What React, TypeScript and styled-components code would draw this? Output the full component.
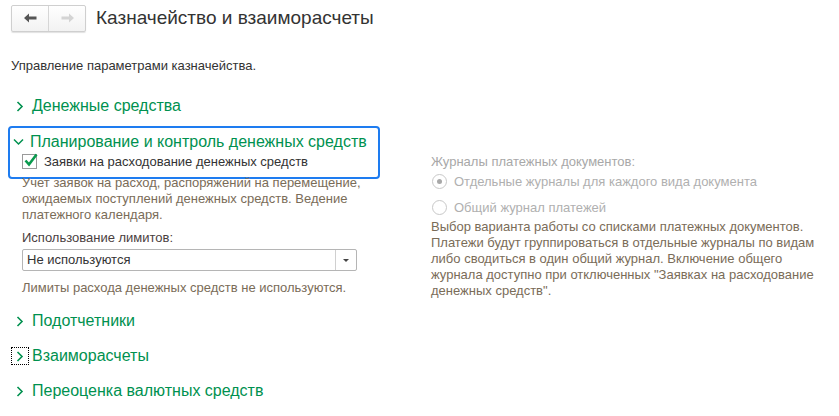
import styled, { createGlobalStyle } from 'styled-components';

const GlobalStyle = createGlobalStyle`
  html, body {
    margin: 0;
    padding: 0;
    background: #fff;
  }
  body {
    font-family: Arial, "Liberation Sans", sans-serif;
    color: #333;
  }
`;

const Page = styled.div`
  width: 839px;
  height: 416px;
  overflow: hidden;
  padding: 5px 0 0 11px;
  box-sizing: border-box;
`;

const Header = styled.div`
  display: flex;
  align-items: center;
  gap: 10px;
  height: 26px;
`;

const NavGroup = styled.div`
  display: flex;
  height: 25px;
  border: 1px solid #cfcfcf;
  border-radius: 2px;
  box-shadow: 0 1px 1px rgba(0, 0, 0, 0.12);
  background: linear-gradient(#fff, #f2f2f2);
`;

const NavButton = styled.div<{ $first?: boolean }>`
  width: 36px;
  display: flex;
  align-items: center;
  justify-content: center;
  border-right: ${(p) => (p.$first ? '1px solid #d6d6d6' : 'none')};
`;

const Title = styled.h1`
  margin: 0;
  font-size: 19px;
  font-weight: normal;
  color: #333;
`;

const Intro = styled.p`
  margin: 27px 0 0;
  font-size: 13px;
  color: #333;
  line-height: 16px;
`;

const Group = styled.div<{ $mt: number }>`
  display: flex;
  align-items: center;
  gap: 5px;
  height: 20px;
  margin-top: ${(p) => p.$mt}px;
  padding-left: 2px;
`;

const GroupTitle = styled.span`
  font-size: 16px;
  color: #00914f;
`;

const Chevron = styled.span<{ $focused?: boolean }>`
  display: flex;
  align-items: center;
  justify-content: center;
  width: 14px;
  height: 14px;
  outline: ${(p) => (p.$focused ? '1px dotted #000' : 'none')};
  outline-offset: 1px;
`;

const Expanded = styled.div`
  display: flex;
  align-items: flex-start;
  margin-top: 10px;
`;

const LeftCol = styled.div`
  width: 410px;
  flex-shrink: 0;
  margin-left: -3px;
`;

const Highlight = styled.div`
  width: 368px;
  border: 2px solid #1e7cf0;
  border-radius: 4px;
  padding: 5px 0 6px 0;
`;

const OpenTitle = styled.div`
  display: flex;
  align-items: center;
  gap: 5px;
  height: 18px;
  padding-left: 1px;
`;

const CheckRow = styled.label`
  display: flex;
  align-items: center;
  gap: 7px;
  height: 20px;
  padding-left: 12px;
  font-size: 13px;
  color: #333;
`;

const Box = styled.span`
  width: 13px;
  height: 13px;
  border: 1px solid #9a9a9a;
  background: #fff;
  position: relative;
  display: inline-block;
`;

const CheckMark = styled.svg`
  position: absolute;
  left: 0;
  top: -3px;
`;

const Inner = styled.div`
  padding-left: 14px;
`;

const Note = styled.p<{ $mt?: number }>`
  margin: ${(p) => p.$mt ?? 0}px 0 0;
  font-size: 13px;
  line-height: 16px;
  color: #7a6c58;
`;

const Label = styled.div`
  margin-top: 7px;
  font-size: 13px;
  line-height: 16px;
  color: #4a3e3e;
`;

const Select = styled.div`
  display: flex;
  width: 335px;
  height: 22px;
  margin-top: 3px;
  border: 1px solid #b5b5b5;
  border-radius: 2px;
  box-sizing: border-box;
  background: #fff;
`;

const SelectValue = styled.div`
  flex: 1;
  padding-left: 4px;
  font-size: 13px;
  line-height: 20px;
  color: #333;
`;

const SelectButton = styled.div`
  width: 20px;
  border-left: 1px solid #d0d0d0;
  display: flex;
  align-items: center;
  justify-content: center;
`;

const Arrow = styled.span`
  width: 0;
  height: 0;
  border-left: 3px solid transparent;
  border-right: 3px solid transparent;
  border-top: 3px solid #444;
`;

const RightCol = styled.div`
  padding-top: 28px;
  margin-left: 13px;
`;

const DisabledLabel = styled.div`
  font-size: 13px;
  line-height: 16px;
  color: #a8a8a8;
`;

const Radio = styled.div<{ $mt: number }>`
  display: flex;
  align-items: center;
  gap: 7px;
  height: 20px;
  margin-top: ${(p) => p.$mt}px;
  font-size: 13px;
  color: #b0b0b0;
`;

const RadioCircle = styled.span<{ $checked?: boolean }>`
  width: 15px;
  height: 15px;
  margin-left: 1px;
  border: 1px solid #c8c8c8;
  border-radius: 50%;
  box-sizing: border-box;
  display: flex;
  align-items: center;
  justify-content: center;
  &::after {
    content: '';
    width: 5px;
    height: 5px;
    border-radius: 50%;
    background: ${(p) => (p.$checked ? '#a8a8a8' : 'transparent')};
  }
`;

const RightNote = styled(Note)`
  width: 400px;
`;

const ChevronRight = () => (
  <svg width="8" height="11" viewBox="0 0 8 11">
    <path d="M1.5 1 L6 5.5 L1.5 10" fill="none" stroke="#00914f" strokeWidth="1.6" />
  </svg>
);

const ChevronDown = () => (
  <svg width="11" height="8" viewBox="0 0 11 8">
    <path d="M1 1.5 L5.5 6 L10 1.5" fill="none" stroke="#00914f" strokeWidth="1.5" />
  </svg>
);

const sections = ['Подотчетники', 'Взаиморасчеты', 'Переоценка валютных средств'];

export default function App() {
  return (
    <Page>
      <GlobalStyle />
      <Header>
        <NavGroup>
          <NavButton $first>
            <svg width="13" height="10" viewBox="0 0 13 10">
              <path d="M0 5 L5 0.5 V3.5 H12.5 V6.5 H5 V9.5 Z" fill="#555" />
            </svg>
          </NavButton>
          <NavButton>
            <svg width="13" height="10" viewBox="0 0 13 10">
              <path d="M13 5 L8 0.5 V3.5 H0.5 V6.5 H8 V9.5 Z" fill="#d4d4d4" />
            </svg>
          </NavButton>
        </NavGroup>
        <Title>Казначейство и взаиморасчеты</Title>
      </Header>

      <Intro>Управление параметрами казначейства.</Intro>

      <Group $mt={22}>
        <Chevron>
          <ChevronRight />
        </Chevron>
        <GroupTitle>Денежные средства</GroupTitle>
      </Group>

      <Expanded>
        <LeftCol>
          <Highlight>
            <OpenTitle>
              <Chevron>
                <ChevronDown />
              </Chevron>
              <GroupTitle>Планирование и контроль денежных средств</GroupTitle>
            </OpenTitle>
            <CheckRow>
              <Box>
                <CheckMark width="16" height="16" viewBox="0 0 16 16">
                  <path d="M2.5 8.5 L6 12.5 L13.5 2.5" fill="none" stroke="#0a9a4e" strokeWidth="2.6" />
                </CheckMark>
              </Box>
              Заявки на расходование денежных средств
            </CheckRow>
          </Highlight>
          <Inner>
            <Note $mt={-4}>
              Учет заявок на расход, распоряжений на перемещение,
              <br />
              ожидаемых поступлений денежных средств. Ведение
              <br />
              платежного календаря.
            </Note>
            <Label>Использование лимитов:</Label>
            <Select>
              <SelectValue>Не используются</SelectValue>
              <SelectButton>
                <Arrow />
              </SelectButton>
            </Select>
            <Note $mt={9}>Лимиты расхода денежных средств не используются.</Note>
          </Inner>
        </LeftCol>

        <RightCol>
          <DisabledLabel>Журналы платежных документов:</DisabledLabel>
          <Radio $mt={1}>
            <RadioCircle $checked />
            Отдельные журналы для каждого вида документа
          </Radio>
          <Radio $mt={6}>
            <RadioCircle />
            Общий журнал платежей
          </Radio>
          <RightNote $mt={2}>
            Выбор варианта работы со списками платежных документов.
            <br />
            Платежи будут группироваться в отдельные журналы по видам
            <br />
            либо сводиться в один общий журнал. Включение общего
            <br />
            журнала доступно при отключенных "Заявках на расходование
            <br />
            денежных средств".
          </RightNote>
        </RightCol>
      </Expanded>

      {sections.map((s, i) => (
        <Group key={s} $mt={i === 0 ? 12 : 15}>
          <Chevron $focused={i === 1}>
            <ChevronRight />
          </Chevron>
          <GroupTitle>{s}</GroupTitle>
        </Group>
      ))}
    </Page>
  );
}
